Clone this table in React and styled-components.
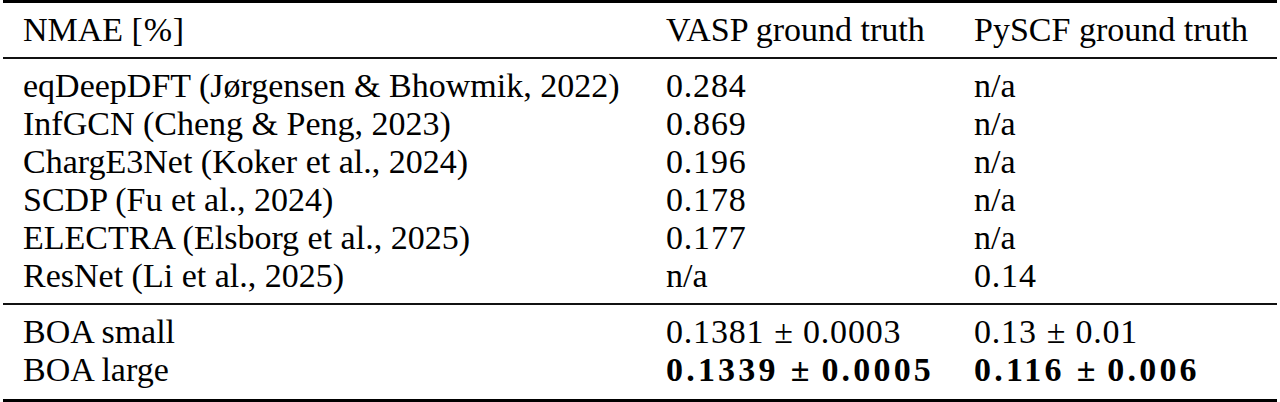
import styled, { createGlobalStyle } from 'styled-components'

/*---> Data <---*/
const models = [
  { name: 'eqDeepDFT (Jørgensen & Bhowmik, 2022)', vasp: '0.284', pyscf: 'n/a' },
  { name: 'InfGCN (Cheng & Peng, 2023)', vasp: '0.869', pyscf: 'n/a' },
  { name: 'ChargE3Net (Koker et al., 2024)', vasp: '0.196', pyscf: 'n/a' },
  { name: 'SCDP (Fu et al., 2024)', vasp: '0.178', pyscf: 'n/a' },
  { name: 'ELECTRA (Elsborg et al., 2025)', vasp: '0.177', pyscf: 'n/a' },
  { name: 'ResNet (Li et al., 2025)', vasp: 'n/a', pyscf: '0.14' },
]

const boa = [
  { name: 'BOA small', vasp: ['0.1381', '0.0003'], pyscf: ['0.13', '0.01'], bold: false },
  { name: 'BOA large', vasp: ['0.1339', '0.0005'], pyscf: ['0.116', '0.006'], bold: true },
]

/*---> Component <---*/
const Value = ({ value }) =>
  value === 'n/a' ? <span>n/a</span> : <Num>{value}</Num>

const PlusMinus = ({ parts, bold }) => (
  <Num $bold={bold}>
    {parts[0]}
    <Pm $bold={bold}>±</Pm>
    {parts[1]}
  </Num>
)

export default function App() {
  return (
    <>
      <GlobalStyle />
      <Page>
        <Table>
          <colgroup>
            <col style={{ width: 643 }} />
            <col style={{ width: 308 }} />
            <col />
          </colgroup>
          <thead>
            <tr>
              <HeadCell>
                NMAE <Num>[%]</Num>
              </HeadCell>
              <HeadCell>VASP ground truth</HeadCell>
              <HeadCell>PySCF ground truth</HeadCell>
            </tr>
          </thead>
          <tbody>
            {models.map((m, i) => {
              const first = i === 0
              const last = i === models.length - 1
              return (
                <tr key={m.name}>
                  <Cell $rule={first} $top={first ? 8 : 0} $bottom={last ? 8.5 : 0}>{m.name}</Cell>
                  <Cell $rule={first} $top={first ? 8 : 0} $bottom={last ? 8.5 : 0}><Value value={m.vasp} /></Cell>
                  <Cell $rule={first} $top={first ? 8 : 0} $bottom={last ? 8.5 : 0}><Value value={m.pyscf} /></Cell>
                </tr>
              )
            })}
            {boa.map((m, i) => {
              const first = i === 0
              const last = i === boa.length - 1
              return (
                <tr key={m.name}>
                  <Cell $rule={first} $top={first ? 7.5 : 0} $bottom={last ? 10.5 : 0}>{m.name}</Cell>
                  <Cell $rule={first} $top={first ? 7.5 : 0} $bottom={last ? 10.5 : 0}>
                    <PlusMinus parts={m.vasp} bold={m.bold} />
                  </Cell>
                  <Cell $rule={first} $top={first ? 7.5 : 0} $bottom={last ? 10.5 : 0}>
                    <PlusMinus parts={m.pyscf} bold={m.bold} />
                  </Cell>
                </tr>
              )
            })}
          </tbody>
        </Table>
      </Page>
    </>
  )
}

/*---> Styles <---*/
const GlobalStyle = createGlobalStyle`
  html, body {
    margin: 0;
    padding: 0;
    background: #fff;
  }
  body {
    font-family: "Liberation Serif", "Times New Roman", serif;
    color: #000;
  }
`

const Page = styled.div`
  width: 1280px;
  height: 402px;
  padding: 0 3px;
  box-sizing: border-box;
  overflow: hidden;
`

const Table = styled.table`
  width: 1274px;
  border-collapse: collapse;
  table-layout: fixed;
  border-top: 3px solid #000;
  border-bottom: 3px solid #000;
  font-size: 34px;
  line-height: 38px;
`

const HeadCell = styled.th`
  font-weight: normal;
  text-align: left;
  white-space: nowrap;
  padding: 8px 0 7.5px 20px;
  border-bottom: 2px solid #111;
`

const Cell = styled.td`
  white-space: nowrap;
  padding: ${(p) => p.$top}px 0 ${(p) => p.$bottom}px 20px;
  border-top: ${(p) => (p.$rule ? '2px solid #111' : 'none')};
`

const Num = styled.span`
  font-weight: ${(p) => (p.$bold ? 'bold' : 'normal')};
  letter-spacing: ${(p) => (p.$bold ? '3.2px' : '0.8px')};
`

const Pm = styled.span`
  display: inline-block;
  letter-spacing: 0;
  margin: 0 ${(p) => (p.$bold ? '12px' : '10px')};
`
